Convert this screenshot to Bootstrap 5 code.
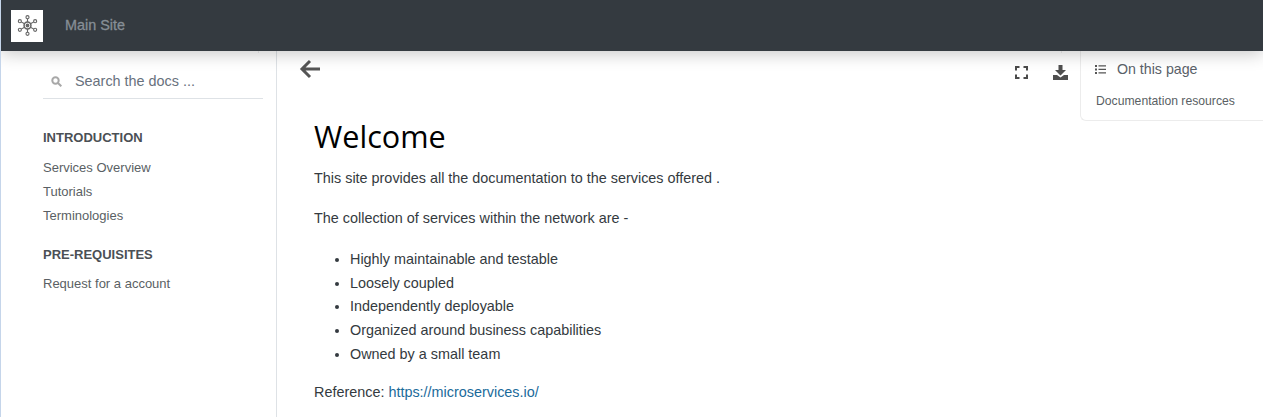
<!DOCTYPE html>
<html lang="en">
<head>
<meta charset="utf-8">
<title>Welcome</title>
<link href="https://cdn.jsdelivr.net/npm/bootstrap@5.3.0/dist/css/bootstrap.min.css" rel="stylesheet">
<style>
html,body{height:417px;overflow:hidden;}
body{font-family:"Liberation Sans",Arial,sans-serif;font-size:14.4px;color:#343a40;background:#fff;border-left:1px solid #c5d5ea;}
.topbar{height:51px;background:#343a40;padding:0 0 0 10px;box-shadow:0 2px 18px rgba(0,0,0,.24);position:relative;z-index:5;flex-wrap:nowrap;justify-content:flex-start;}
.topbar::before,.topbar::after{content:"";position:absolute;top:51px;width:1px;height:2px;background:#cfcfcf;}
.topbar::before{left:257px;}
.topbar::after{left:1060px;}
.logo-box{width:32px;height:32px;background:#fff;}
.brand-link{color:#868e96;font-size:14.4px;font-weight:400;margin-left:22px;text-decoration:none;-webkit-text-stroke:.3px #868e96;}
.page-wrap{height:364px;}
.side{height:364px;border-right:1px solid #dee2e6;padding:12px 13px 0 42px;flex:none;box-sizing:content-box;width:220px;}
.search-row{height:36px;border-bottom:1px solid #dee2e6;padding-left:8px;padding-top:2px;}
.search-row span{color:#68717d;font-size:14.4px;margin-left:13px;}
.sec-title{font-size:13px;font-weight:700;color:#4b5055;line-height:20px;margin:0;text-transform:uppercase;}
.nav-group{margin-top:29px;}
.nav-group + .nav-group{margin-top:17px;}
.nav-items a{display:block;color:#5a5f64;font-size:13px;line-height:24px;text-decoration:none;}
.nav-items{margin-top:8px;}
.nav-group + .nav-group .nav-items{margin-top:7px;}
.doc{flex:1;min-width:0;position:relative;}
.tools{height:36px;padding:7px 0 0 22px;}
.doc-body{padding:29px 0 0 37px;}
.doc-title{font-family:"Open Sans",sans-serif;font-size:30.6px;font-weight:400;color:#000;line-height:40px;margin:0 0 12px;}
.doc-body p{margin:0 0 18.4px;line-height:21.6px;font-size:14.4px;color:#343a40;}
.doc-body ul{margin:0 0 15.5px;padding-left:36px;}
.doc-body li{line-height:23.7px;}
.doc-body a{color:#1a6a9a;text-decoration:none;}
.toc-panel{position:absolute;left:803px;top:0;width:183px;height:70px;border:1px solid #ececec;border-top:0;border-right:0;border-radius:0 0 0 6px;background:#fff;padding:9px 0 0 15px;}
.toc-head{color:#5a6169;font-size:14.2px;line-height:18px;}
.toc-head svg{margin-right:11px;margin-left:-1px;}
.toc-link{color:#5a5f64;font-size:12.2px;line-height:16px;margin-top:15px;}
.tool-icons{position:absolute;top:14px;left:738px;gap:25px;}
</style>
</head>
<body>
<nav class="navbar topbar d-flex align-items-center">
  <span class="logo-box d-flex align-items-center justify-content-center">
    <svg width="21" height="21" viewBox="0 0 22 22" fill="none" stroke="#666" stroke-width="1.200">
      <circle cx="11" cy="11" r="3.600" stroke-width="1.600"/><circle cx="11" cy="11" r="1.400" fill="#666"/>
      <path d="M11 7.400V3.800M11 14.600v3.600M7.900 9.200 4.400 7.200M14.100 9.200l3.500-2M7.900 12.800l-3.500 2M14.100 12.800l3.500 2"/>
      <circle cx="11" cy="2.300" r="1.600"/><circle cx="11" cy="19.700" r="1.600"/><circle cx="3" cy="6.500" r="1.600"/><circle cx="19" cy="6.500" r="1.600"/><circle cx="3" cy="15.500" r="1.600"/><circle cx="19" cy="15.500" r="1.600"/>
    </svg>
  </span>
  <a class="brand-link" href="#">Main Site</a>
</nav>
<div class="page-wrap d-flex">
  <aside class="side">
    <div class="search-row d-flex align-items-center">
      <svg width="11" height="11" viewBox="0 0 11 11" fill="none" stroke="#a8a8a8" stroke-width="2"><circle cx="4.500" cy="4.500" r="3.200"/><path d="M7 7l3.300 3.300"/></svg>
      <span>Search the docs ...</span>
    </div>
    <div class="nav-group">
      <h6 class="sec-title">Introduction</h6>
      <div class="nav-items"><a href="#">Services Overview</a><a href="#">Tutorials</a><a href="#">Terminologies</a></div>
    </div>
    <div class="nav-group">
      <h6 class="sec-title">Pre-requisites</h6>
      <div class="nav-items"><a href="#">Request for a account</a></div>
    </div>
  </aside>
  <main class="doc">
    <div class="tools">
      <svg width="22" height="20" viewBox="0 0 22 20" fill="none" stroke="#555" stroke-width="3"><path d="M21 10H3M11 2l-8 8 8 8"/></svg>
    </div>
    <div class="tool-icons d-flex align-items-center">
      <svg width="13" height="13" viewBox="0 0 13 13" fill="none" stroke="#4a4a4a" stroke-width="2"><path d="M1 4.500V1h3.500M8.500 1H12v3.500M12 8.500V12H8.500M4.500 12H1V8.500"/></svg>
      <svg width="15" height="15" viewBox="0 0 15 15" fill="#4f4f4f"><path d="M5.500 0h4v5h3.500L7.500 10.500 2 5h3.500z"/><path d="M0 10h4l3.500 2.500L11 10h4v5H0z"/></svg>
    </div>
    <div class="toc-panel">
      <div class="toc-head d-flex align-items-center"><svg width="11" height="9" viewBox="0 0 11 9" fill="#555"><path d="M0 0h2v2H0zM3.500 .3H11v1.300H3.500zM0 3.500h2v2H0zM3.500 3.800H11v1.300H3.500zM0 7h2v2H0zM3.500 7.300H11v1.300H3.500z"/></svg>On this page</div>
      <div class="toc-link">Documentation resources</div>
    </div>
    <div class="doc-body">
      <h1 class="doc-title">Welcome</h1>
      <p>This site provides all the documentation to the services offered .</p>
      <p>The collection of services within the network are -</p>
      <ul>
        <li>Highly maintainable and testable</li>
        <li>Loosely coupled</li>
        <li>Independently deployable</li>
        <li>Organized around business capabilities</li>
        <li>Owned by a small team</li>
      </ul>
      <p>Reference: <a href="#">https://microservices.io/</a></p>
    </div>
  </main>
</div>
<script src="https://cdn.jsdelivr.net/npm/bootstrap@5.3.0/dist/js/bootstrap.bundle.min.js"></script>
</body>
</html>
